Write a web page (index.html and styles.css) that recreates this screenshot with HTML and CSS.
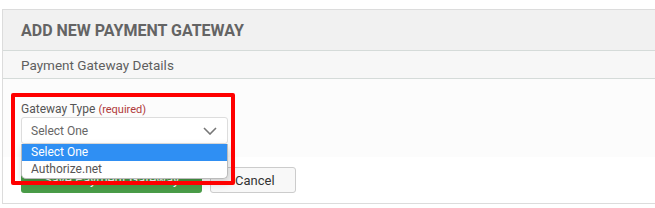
FILE: index.html
```html
<!DOCTYPE html>
<html lang="en">
<head>
    <meta charset="UTF-8">
    <meta name="viewport" content="width=device-width, initial-scale=1.0">
    <title>Add New Payment Gateway</title>
    <link rel="stylesheet" href="styles.css">
</head>
<body>

    <div class="panel">
        <div class="panel-head">
            <h1>ADD NEW PAYMENT GATEWAY</h1>
        </div>
        <div class="panel-sub">
            <h2>Payment Gateway Details</h2>
        </div>
        <div class="panel-body">
            <div class="field">
                <label>Gateway Type <span class="req">(required)</span></label>
                <div class="select">
                    <span>Select One</span>
                    <svg width="14" height="8" viewBox="0 0 14 8"><path d="M1 1 L7 7 L13 1" fill="none" stroke="#777" stroke-width="1.6"/></svg>
                </div>
                <ul class="options">
                    <li class="active">Select One</li>
                    <li>Authorize.net</li>
                </ul>
                <div class="highlight"></div>
            </div>
            <div class="actions">
                <button class="btn-save">Save Payment Gateway</button>
                <button class="btn-cancel">Cancel</button>
            </div>
        </div>
    </div>

</body>
</html>
```

FILE: styles.css
```css
* {
    margin: 0;
    padding: 0;
    box-sizing: border-box;
}

body {
    font-family: Roboto, "Liberation Sans", sans-serif;
    background: #fff;
    overflow: hidden;
}

.panel {
    margin: 9px -20px 0 2px;
    border: 1px solid #dcdcdc;
    height: 195px;
}

.panel-head {
    height: 41px;
    background: #f1f1f1;
    border-bottom: 1px solid #d5dbd9;
    padding: 0 18px;
    display: flex;
    align-items: center;
}

.panel-head h1 {
    font-size: 16px;
    font-weight: 700;
    color: #646464;
    padding-top: 1px;
}

.panel-sub {
    height: 28px;
    background: #f7f7f7;
    border-bottom: 1px solid #d5dbd9;
    padding: 0 18px;
    display: flex;
    align-items: center;
}

.panel-sub h2 {
    font-size: 13.5px;
    font-weight: 400;
    color: #5f5f5f;
}

.panel-body {
    background: #fff;
}

.field {
    position: relative;
    background: #fcfcfc;
    padding: 23px 18px 14px;
    height: 78px;
}

.field label {
    display: block;
    font-size: 12px;
    color: #555;
    line-height: 15px;
}

.req {
    font-size: 11px;
    color: #b03a3a;
}

.select {
    width: 207px;
    height: 27px;
    border: 1px solid #ddd;
    border-radius: 3px;
    background: #fff;
    display: flex;
    align-items: center;
    justify-content: space-between;
    padding: 0 10px 0 9px;
    font-size: 12px;
    color: #666;
}

.options {
    position: absolute;
    left: 18px;
    top: 65px;
    width: 207px;
    list-style: none;
    background: #fff;
    border: 1px solid #bbb;
    border-top: none;
    border-radius: 0 0 5px 5px;
    overflow: hidden;
    box-shadow: 2px 4px 10px rgba(0, 0, 0, 0.18);
    z-index: 2;
}

.options li {
    height: 17px;
    line-height: 17px;
    padding-left: 9px;
    font-size: 12px;
    color: #555;
}

.options li.active {
    background: #2f8ff3;
    color: #fff;
}

.highlight {
    position: absolute;
    left: 8px;
    top: 14px;
    width: 224px;
    height: 92px;
    border: 4px solid #f00;
    border-radius: 2px;
    z-index: 3;
}

.actions {
    display: flex;
    align-items: flex-end;
    gap: 8px;
    padding: 8px 18px 0;
}

.btn-save {
    width: 181px;
    height: 28px;
    background: #4a9c48;
    border: none;
    border-radius: 3px;
    color: #fff;
    font-family: inherit;
    font-size: 13px;
}

.btn-cancel {
    width: 86px;
    height: 26px;
    background: #f8f8f8;
    border: 1px solid #ccc;
    border-radius: 3px;
    color: #333;
    font-family: inherit;
    font-size: 13px;
    text-align: left;
    padding-left: 24px;
}
```
